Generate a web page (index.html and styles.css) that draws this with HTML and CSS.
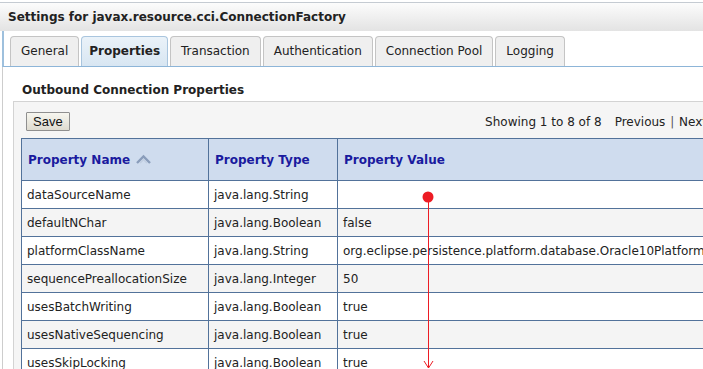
FILE: index.html
```html
<!DOCTYPE html>
<html lang="en">
<head>
    <meta charset="UTF-8">
    <meta name="viewport" content="width=device-width, initial-scale=1.0">
    <title>Settings for javax.resource.cci.ConnectionFactory</title>
    <link rel="stylesheet" href="styles.css">
</head>
<body>
    <div class="titlebar">Settings for javax.resource.cci.ConnectionFactory</div>

    <div class="tabbar">
        <div class="tab">General</div>
        <div class="tab active">Properties</div>
        <div class="tab">Transaction</div>
        <div class="tab">Authentication</div>
        <div class="tab">Connection Pool</div>
        <div class="tab">Logging</div>
    </div>

    <div class="content">
        <h2 class="section-title">Outbound Connection Properties</h2>

        <div class="panel">
            <div class="toolbar">
                <button class="btn">Save</button>
                <div class="pager">
                    <span>Showing 1 to 8 of 8</span>
                    <span class="pager-links">Previous <span class="sep">|</span> Next</span>
                </div>
            </div>

            <table class="props">
                <colgroup>
                    <col class="col-name">
                    <col class="col-type">
                    <col class="col-value">
                </colgroup>
                <thead>
                    <tr>
                        <th>Property Name
                            <svg class="sort-icon" width="17" height="12" viewBox="0 0 17 12">
                                <polyline points="2,10 8.5,3.5 15,10" fill="none" stroke="#8a9dbb" stroke-width="2.4"/>
                                <polyline points="5,10 8.5,6.5 12,10" fill="none" stroke="#c2cfe2" stroke-width="1.6"/>
                            </svg>
                        </th>
                        <th>Property Type</th>
                        <th>Property Value</th>
                    </tr>
                </thead>
                <tbody>
                    <tr><td>dataSourceName</td><td>java.lang.String</td><td></td></tr>
                    <tr><td>defaultNChar</td><td>java.lang.Boolean</td><td>false</td></tr>
                    <tr><td>platformClassName</td><td>java.lang.String</td><td>org.eclipse.persistence.platform.database.Oracle10Platform</td></tr>
                    <tr><td>sequencePreallocationSize</td><td>java.lang.Integer</td><td>50</td></tr>
                    <tr><td>usesBatchWriting</td><td>java.lang.Boolean</td><td>true</td></tr>
                    <tr><td>usesNativeSequencing</td><td>java.lang.Boolean</td><td>true</td></tr>
                    <tr><td>usesSkipLocking</td><td>java.lang.Boolean</td><td>true</td></tr>
                </tbody>
            </table>
        </div>
    </div>

    <!-- red annotation drawn over the table -->
    <svg class="annotation" width="703" height="369" viewBox="0 0 703 369">
        <circle cx="428" cy="197" r="5.5" fill="#ed1c24"/>
        <line x1="428.5" y1="197" x2="428.5" y2="368" stroke="#ed1c24" stroke-width="1"/>
        <polyline points="424,361 428.5,368 433,361" fill="none" stroke="#ed1c24" stroke-width="1"/>
    </svg>
</body>
</html>
```

FILE: styles.css
```css
/* General styling */
html, body {
    overflow: hidden;
}

body {
    font-family: 'DejaVu Sans', sans-serif;
    font-size: 12px;
    color: #222;
    margin: 0;
    padding: 0;
    background-color: #fff;
    position: relative;
    width: 1000px;
}

/* Title bar */
.titlebar {
    margin-top: 2px;
    border-top: 1px solid #c5cbd2;
    height: 28px;
    line-height: 28px;
    padding-left: 8px;
    background: linear-gradient(#fcfcfc, #e3e3e3);
    font-weight: bold;
    font-size: 12px;
    color: #222;
}

/* Tabs */
.tabbar {
    display: flex;
    gap: 2px;
    margin-left: 2px;
    padding: 5px 0 0 6px;
    border-left: 2px solid #9ec0dd;
    border-bottom: 1px solid #8db5d8;
}

.tab {
    line-height: 29px;
    padding: 0 10px;
    background: #efefef;
    border: 1px solid #c4c4c4;
    border-bottom: none;
    border-radius: 4px 4px 0 0;
    color: #222;
}

.tab.active {
    font-weight: bold;
    padding: 0 7px;
    background: linear-gradient(#eaf2f9, #d8e6f2);
    border-color: #a9c5de;
}

/* Main area */
.content {
    margin-left: 2px;
    border-left: 1px solid #cdcdcd;
    padding-bottom: 40px;
}

.section-title {
    margin: 0;
    padding: 14px 0 0 19px;
    font-size: 12px;
    line-height: 18px;
    font-weight: bold;
    color: #222;
}

.panel {
    margin: 2px 0 0 10px;
    width: 693px;
    border-top: 1px solid #d3d3d3;
    border-left: 1px solid #d3d3d3;
    background: #f5f5f5;
}

.toolbar {
    display: flex;
    align-items: center;
    height: 36px;
    padding-left: 12px;
}

.btn {
    font-family: 'Liberation Sans', Arial, sans-serif;
    font-size: 13px;
    height: 19px;
    padding: 0 6px;
    margin-top: 2px;
    color: #111;
    background: linear-gradient(#f7f6ef, #dedbd0);
    border: 1px solid #8f8f8f;
    border-radius: 1px;
}

.pager {
    margin-left: auto;
    display: flex;
    gap: 13px;
    margin-top: 3px;
}

.pager .sep {
    color: #555;
    padding: 0 1px;
}

/* Properties table */
.props {
    margin-left: 7px;
    width: 900px;
    border-collapse: collapse;
    table-layout: fixed;
    background: #fff;
}

.col-name {
    width: 187px;
}

.col-type {
    width: 129px;
}

.props th,
.props td {
    border: 1px solid #52729a;
    text-align: left;
    padding: 0 5px;
    white-space: nowrap;
    overflow: hidden;
}

.props th {
    height: 41px;
    background: #cfdcee;
    color: #1a1a9e;
    font-weight: bold;
    padding-left: 6px;
}

.props td {
    height: 27px;
}

.props tbody tr:nth-child(even) td {
    background: #f4f4f4;
}

.sort-icon {
    vertical-align: -1px;
    margin-left: 1px;
}

/* Annotation over the page */
.annotation {
    position: absolute;
    left: 0;
    top: 0;
    pointer-events: none;
}
```
